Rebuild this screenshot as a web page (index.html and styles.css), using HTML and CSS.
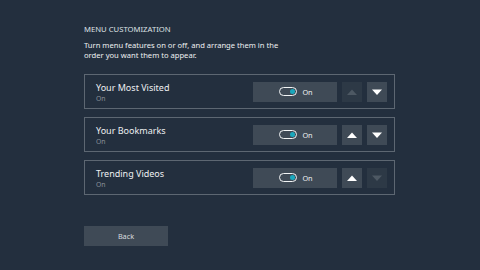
FILE: index.html
```html
<!DOCTYPE html>
<html>
<head>
<meta charset="utf-8">
<link rel="stylesheet" href="styles.css">
</head>
<body>
<div class="page">
  <div class="title">MENU CUSTOMIZATION</div>
  <div class="desc">Turn menu features on or off, and arrange them in the<br>order you want them to appear.</div>
  <div class="list">
    <div class="card">
      <div class="info"><div class="name">Your Most Visited</div><div class="state">On</div></div>
      <div class="controls">
        <div class="toggle"><span class="switch"><span class="dot"></span></span><span class="tlabel">On</span></div>
        <div class="arrow disabled"><svg viewBox="0 0 20 20" width="20" height="20"><path d="M5 13 L10 7.5 L15 13 Z"/></svg></div>
        <div class="arrow"><svg viewBox="0 0 20 20" width="20" height="20"><path d="M5 7.5 L15 7.5 L10 13 Z"/></svg></div>
      </div>
    </div>
    <div class="card">
      <div class="info"><div class="name">Your Bookmarks</div><div class="state">On</div></div>
      <div class="controls">
        <div class="toggle"><span class="switch"><span class="dot"></span></span><span class="tlabel">On</span></div>
        <div class="arrow"><svg viewBox="0 0 20 20" width="20" height="20"><path d="M5 13 L10 7.5 L15 13 Z"/></svg></div>
        <div class="arrow"><svg viewBox="0 0 20 20" width="20" height="20"><path d="M5 7.5 L15 7.5 L10 13 Z"/></svg></div>
      </div>
    </div>
    <div class="card">
      <div class="info"><div class="name">Trending Videos</div><div class="state">On</div></div>
      <div class="controls">
        <div class="toggle"><span class="switch"><span class="dot"></span></span><span class="tlabel">On</span></div>
        <div class="arrow"><svg viewBox="0 0 20 20" width="20" height="20"><path d="M5 13 L10 7.5 L15 13 Z"/></svg></div>
        <div class="arrow disabled"><svg viewBox="0 0 20 20" width="20" height="20"><path d="M5 7.5 L15 7.5 L10 13 Z"/></svg></div>
      </div>
    </div>
  </div>
  <div class="back">Back</div>
</div>
</body>
</html>
```

FILE: styles.css
```css
html, body {
  margin: 0;
  padding: 0;
  background: #232f3e;
  width: 480px;
  height: 270px;
  overflow: hidden;
}
.page {
  padding: 24px 0 0 84px;
  width: 311px;
  font-family: "Noto Sans", "Open Sans", sans-serif;
  color: #e8eaec;
}
.title {
  font-size: 7.7px;
  line-height: 11px;
  color: #dfe2e5;
}
.desc {
  margin-top: 5px;
  font-size: 7.6px;
  line-height: 10px;
  color: #eef0f2;
}
.list {
  margin-top: 14px;
  display: flex;
  flex-direction: column;
  gap: 8px;
}
.card {
  height: 33px;
  border: 1px solid #5d6772;
  display: flex;
  align-items: center;
  justify-content: space-between;
  padding: 0 7px 0 11px;
}
.info {
  display: flex;
  flex-direction: column;
  padding-top: 2px;
}
.name {
  font-size: 9px;
  line-height: 12px;
  color: #eef0f2;
}
.state {
  font-size: 6.8px;
  line-height: 9px;
  color: #8a9199;
}
.controls {
  display: flex;
  align-items: center;
  gap: 5px;
}
.toggle {
  width: 84px;
  height: 20px;
  background: #3f4a56;
  display: flex;
  align-items: center;
  justify-content: center;
  gap: 5px;
  padding-left: 2px;
  box-sizing: border-box;
}
.switch {
  width: 18px;
  height: 9px;
  box-sizing: border-box;
  border: 1.2px solid #f2f4f5;
  border-radius: 5px;
  display: flex;
  align-items: center;
  justify-content: flex-end;
  padding-right: 1.5px;
}
.dot {
  width: 5px;
  height: 5px;
  border-radius: 50%;
  background: #1aa8bd;
}
.tlabel {
  font-size: 7.3px;
  color: #eef0f2;
}
.arrow {
  width: 20px;
  height: 20px;
  background: #3f4a56;
}
.arrow svg {
  display: block;
  fill: #ffffff;
}
.arrow.disabled {
  background: #2d3946;
}
.arrow.disabled svg {
  fill: #4d5863;
}
.back {
  margin-top: 31px;
  width: 84px;
  height: 20px;
  background: #3f4a56;
  color: #d6dade;
  font-size: 7.3px;
  display: flex;
  align-items: center;
  justify-content: center;
}
```
